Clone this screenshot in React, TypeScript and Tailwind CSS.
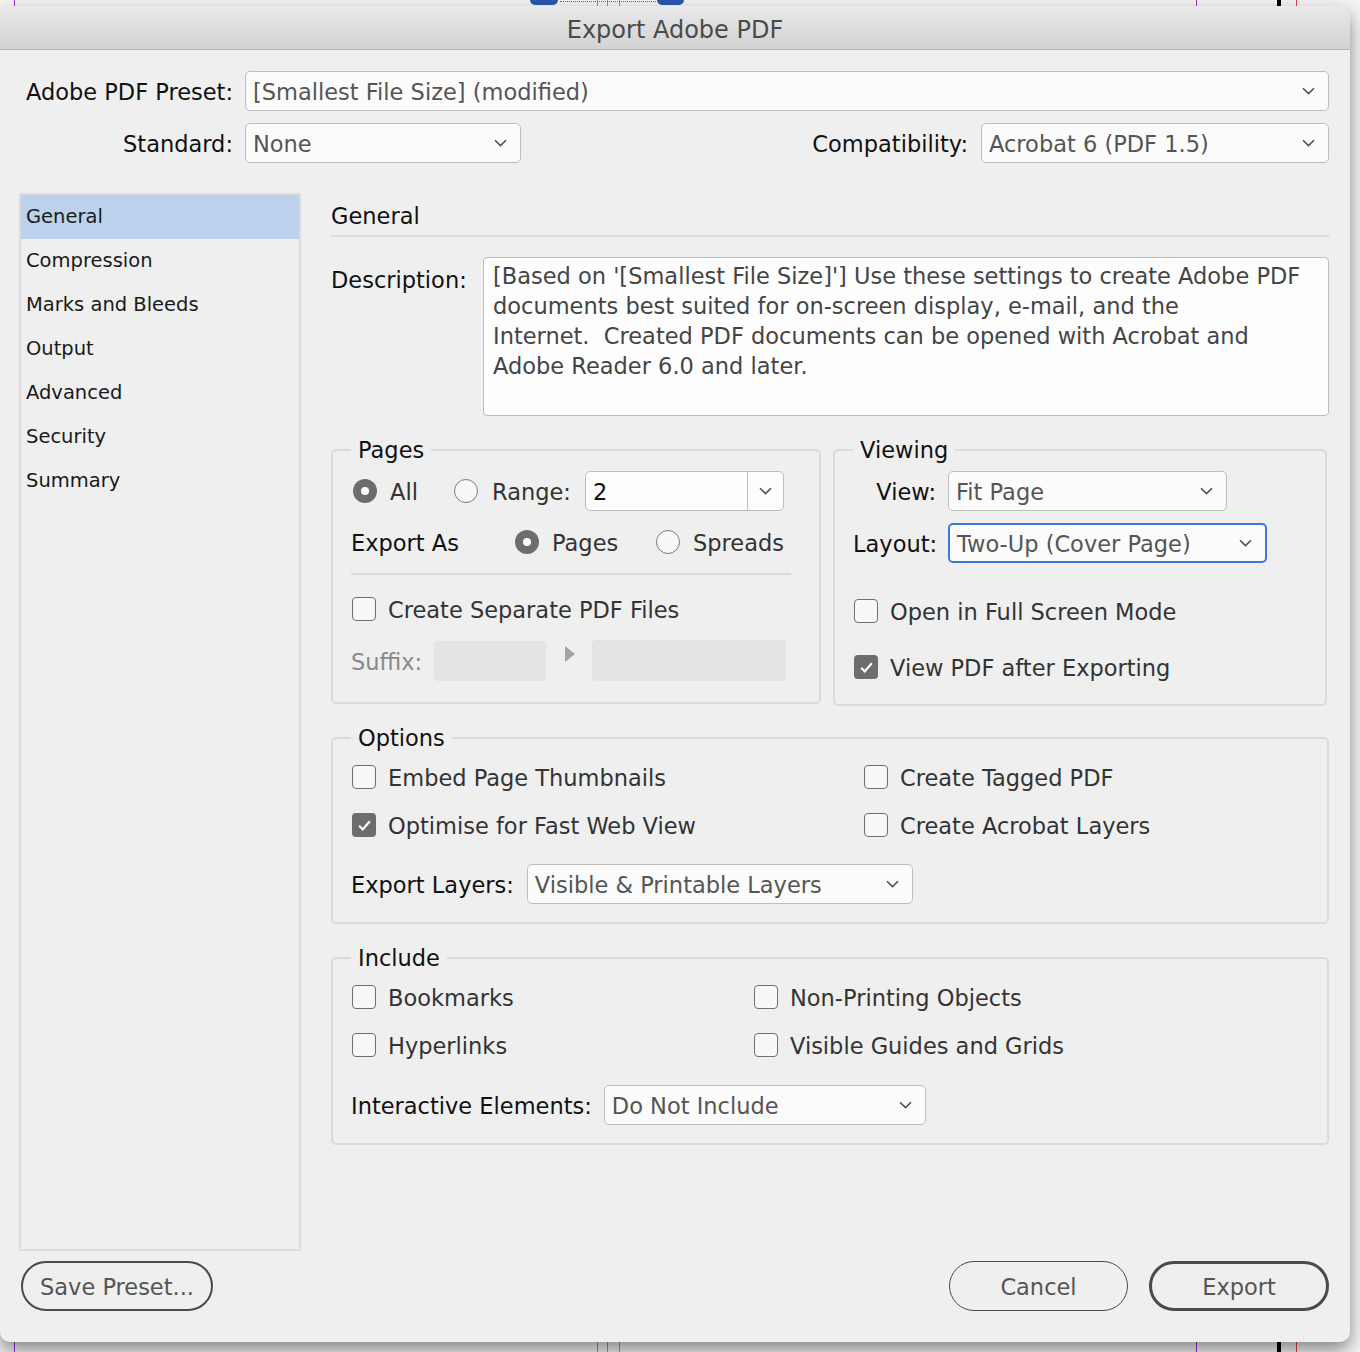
import clsx from "clsx"

function Chevron() {
  return (
    <svg width="13" height="8" viewBox="0 0 13 8" className="shrink-0">
      <path d="M1 1.2 L6.5 6.6 L12 1.2" fill="none" stroke="#505050" strokeWidth="1.6" />
    </svg>
  )
}

function Select({ value, className, focus }: { value: string; className?: string; focus?: boolean }) {
  return (
    <div
      className={clsx(
        "flex h-[40px] items-center justify-between rounded-[5px] bg-[#fbfbfb] pl-[7px] pr-[13px] text-[#555]",
        focus ? "border-2 border-[#3a7bd8]" : "border-[1.5px] border-[#bdbdbd]",
        className
      )}
    >
      <span className="whitespace-nowrap pt-[4px]">{value}</span>
      <Chevron />
    </div>
  )
}

function Radio({ checked }: { checked?: boolean }) {
  if (checked) {
    return (
      <span className="flex size-[24px] shrink-0 items-center justify-center rounded-full bg-[#6d6d6d]">
        <span className="size-[8px] rounded-full bg-white" />
      </span>
    )
  }
  return <span className="size-[24px] shrink-0 rounded-full border-[1.5px] border-[#7b7b7b] bg-[#f8f8f8]" />
}

function Checkbox({ checked }: { checked?: boolean }) {
  if (checked) {
    return (
      <span className="flex size-[24px] shrink-0 items-center justify-center rounded-[4px] bg-[#6d6d6d]">
        <svg width="17" height="17" viewBox="0 0 24 24">
          <path d="M4.5 12.5 L9.5 17.5 L19.5 6" fill="none" stroke="#fff" strokeWidth="3" />
        </svg>
      </span>
    )
  }
  return <span className="size-[24px] shrink-0 rounded-[4px] border-[1.5px] border-[#707070] bg-[#f8f8f8]" />
}

function Check({ label, checked, className }: { label: string; checked?: boolean; className?: string }) {
  return (
    <div className={clsx("flex h-[40px] items-center gap-[12px] pl-[1px] text-[#333]", className)}>
      <Checkbox checked={checked} />
      <span className="whitespace-nowrap pt-[4px]">{label}</span>
    </div>
  )
}

function Group({ title, className, children }: { title: string; className?: string; children: React.ReactNode }) {
  return (
    <fieldset className={clsx("rounded-[5px] border-2 border-[#dadada] px-[18px]", className)}>
      <legend className="px-[7px] leading-[30px] text-[#111]">{title}</legend>
      {children}
    </fieldset>
  )
}

const sections = ["General", "Compression", "Marks and Bleeds", "Output", "Advanced", "Security", "Summary"]

export default function App() {
  return (
    <div className="relative h-[1352px] w-[1360px] overflow-hidden bg-[#f4f4f4] font-['DejaVu_Sans',sans-serif] text-[22.5px]">
      {/* page guides behind the dialog */}
      <div className="absolute left-[14px] top-0 h-full w-[1px] bg-[#9b30e0]" />
      <div className="absolute left-[1196px] top-0 h-full w-[1px] bg-[#9b30e0]" />
      <div className="absolute left-[1277px] top-0 h-full w-[4px] bg-black" />
      <div className="absolute left-[1296px] top-0 h-full w-[1px] bg-[#e0404a]" />
      <div className="absolute left-[597px] top-0 h-full w-[1px] bg-[#22c6cc]" />
      <div className="absolute left-[607px] top-0 h-full w-[1px] bg-[#22c6cc]" />
      <div className="absolute left-[619px] top-0 h-full w-[1px] bg-[#22c6cc]" />
      <div className="absolute left-[530px] top-0 h-[5px] w-[28px] rounded-b-full bg-[#2a57b0]" />
      <div className="absolute left-[657px] top-0 h-[5px] w-[27px] rounded-b-full bg-[#2a57b0]" />
      <div className="absolute left-[560px] top-[1px] w-[96px] border-t border-dotted border-[#3a6fd0]" />

      <div className="relative z-10 mt-[6px] flex h-[1336px] w-[1350px] flex-col overflow-hidden rounded-[10px] bg-[#efefef] shadow-[0_8px_18px_rgba(0,0,0,0.45)]">
        <div className="flex h-[44px] shrink-0 items-center justify-center border-b border-[#b4b4b4] bg-gradient-to-b from-[#e9e9e9] to-[#d2d2d2] pt-[4px] text-[24px] text-[#4a4a4a]">
          Export Adobe PDF
        </div>

        <div className="flex flex-col pl-[19px] pr-[21px]">
          <div className="mt-[21px] flex items-center">
            <div className="w-[226px] whitespace-nowrap pr-[12px] pt-[4px] text-right text-[#111]">Adobe PDF Preset:</div>
            <Select value="[Smallest File Size] (modified)" className="flex-1" />
          </div>

          <div className="mt-[12px] flex items-center justify-between">
            <div className="flex items-center">
              <div className="w-[226px] pr-[12px] pt-[4px] text-right text-[#111]">Standard:</div>
              <Select value="None" className="w-[276px]" />
            </div>
            <div className="flex items-center">
              <div className="pr-[13px] pt-[4px] text-[#111]">Compatibility:</div>
              <Select value="Acrobat 6 (PDF 1.5)" className="w-[348px]" />
            </div>
          </div>

          <div className="mt-[30px] flex h-[1058px]">
            <div className="w-[282px] shrink-0 border-2 border-[#dcdcdc] text-[19.5px] text-[#1a1a1a]">
              {sections.map((s, i) => (
                <div key={s} className={clsx("flex h-[44px] items-center pl-[5px]", i === 0 && "bg-[#bcd2ec]")}>
                  {s}
                </div>
              ))}
            </div>

            <div className="ml-[30px] flex flex-1 flex-col">
              <div className="flex h-[44px] items-center border-b-2 border-[#dcdcdc] pt-[6px] text-[#111]">General</div>

              <div className="mt-[20px] flex">
                <div className="w-[152px] shrink-0 pt-[7px] text-[#111]">Description:</div>
                <div className="h-[159px] flex-1 rounded-[4px] border-[1.5px] border-[#bdbdbd] bg-[#fdfdfd] px-[9px] pt-[3px] leading-[30px] text-[#444]">
                  <div className="whitespace-pre">[Based on '[Smallest File Size]'] Use these settings to create Adobe PDF</div>
                  <div className="whitespace-pre">documents best suited for on-screen display, e-mail, and the</div>
                  <div className="whitespace-pre">Internet.  Created PDF documents can be opened with Acrobat and</div>
                  <div className="whitespace-pre">Adobe Reader 6.0 and later.</div>
                </div>
              </div>

              <div className="mt-[19px] flex items-start gap-[12px]">
                <Group title="Pages" className="w-[490px] pb-[21px]">
                  <div className="mt-[6px] flex h-[40px] items-center text-[#333]">
                    <div className="flex w-[103px] items-center gap-[13px] pl-[2px]">
                      <Radio checked />
                      <span className="pt-[4px]">All</span>
                    </div>
                    <div className="flex items-center gap-[14px]">
                      <Radio />
                      <span className="pt-[4px]">Range:</span>
                    </div>
                    <div className="ml-[14px] flex h-[40px] w-[199px] items-center rounded-[5px] border-[1.5px] border-[#bdbdbd] bg-[#fdfdfd]">
                      <span className="flex-1 pl-[7px] pt-[4px] text-[#111]">2</span>
                      <span className="flex h-full w-[36px] items-center justify-center border-l-[1.5px] border-[#bdbdbd]">
                        <Chevron />
                      </span>
                    </div>
                  </div>
                  <div className="mt-[11px] flex h-[40px] items-center text-[#333]">
                    <div className="w-[164px] pt-[4px] text-[#111]">Export As</div>
                    <div className="flex w-[141px] items-center gap-[13px]">
                      <Radio checked />
                      <span className="pt-[4px]">Pages</span>
                    </div>
                    <div className="flex items-center gap-[13px]">
                      <Radio />
                      <span className="pt-[4px]">Spreads</span>
                    </div>
                  </div>
                  <div className="mr-[10px] mt-[11px] h-[2px] bg-[#dcdcdc]" />
                  <Check label="Create Separate PDF Files" className="mt-[14px]" />
                  <div className="mt-[11px] flex h-[41px] items-center">
                    <span className="w-[83px] pt-[4px] text-[#8a8a8a]">Suffix:</span>
                    <span className="h-[40px] w-[112px] rounded-[4px] bg-[#e4e4e4]" />
                    <svg width="10" height="16" viewBox="0 0 10 16" className="mb-[14px] ml-[19px] mr-[17px]">
                      <path d="M0 0 L10 8 L0 16 Z" fill="#a3a3a3" />
                    </svg>
                    <span className="h-[41px] w-[194px] rounded-[4px] bg-[#e4e4e4]" />
                  </div>
                </Group>

                <Group title="Viewing" className="w-[494px] pb-[17px]">
                  <div className="mt-[6px] flex items-center">
                    <div className="w-[95px] pr-[12px] pt-[4px] text-right text-[#111]">View:</div>
                    <Select value="Fit Page" className="w-[279px]" />
                  </div>
                  <div className="mt-[12px] flex items-center">
                    <div className="w-[95px] pr-[12px] pt-[4px] text-right text-[#111]">Layout:</div>
                    <Select value="Two-Up (Cover Page)" className="w-[319px]" focus />
                  </div>
                  <Check label="Open in Full Screen Mode" className="mt-[28px]" />
                  <Check label="View PDF after Exporting" checked className="mt-[16px]" />
                </Group>
              </div>

              <Group title="Options" className="mt-[17px] pb-[18px]">
                <div className="mt-[4px] flex">
                  <Check label="Embed Page Thumbnails" className="w-[512px]" />
                  <Check label="Create Tagged PDF" />
                </div>
                <div className="mt-[8px] flex">
                  <Check label="Optimise for Fast Web View" checked className="w-[512px]" />
                  <Check label="Create Acrobat Layers" />
                </div>
                <div className="mt-[19px] flex items-center">
                  <div className="pr-[13px] pt-[4px] text-[#111]">Export Layers:</div>
                  <Select value="Visible & Printable Layers" className="w-[386px]" />
                </div>
              </Group>

              <Group title="Include" className="mt-[19px] pb-[18px]">
                <div className="mt-[4px] flex">
                  <Check label="Bookmarks" className="w-[402px]" />
                  <Check label="Non-Printing Objects" />
                </div>
                <div className="mt-[8px] flex">
                  <Check label="Hyperlinks" className="w-[402px]" />
                  <Check label="Visible Guides and Grids" />
                </div>
                <div className="mt-[20px] flex items-center">
                  <div className="pr-[12px] pt-[4px] text-[#111]">Interactive Elements:</div>
                  <Select value="Do Not Include" className="w-[322px]" />
                </div>
              </Group>
            </div>
          </div>

          <div className="mt-[10px] flex h-[50px] items-center justify-between">
            <button className="ml-[2px] flex h-[50px] w-[192px] items-center justify-center rounded-full border-2 border-[#4a4a4a] pt-[4px] text-[#555]">
              Save Preset...
            </button>
            <div className="flex gap-[21px]">
              <button className="flex h-[50px] w-[179px] items-center justify-center rounded-full border-[1.5px] border-[#4a4a4a] pt-[4px] text-[#555]">
                Cancel
              </button>
              <button className="flex h-[50px] w-[180px] items-center justify-center rounded-full border-[3px] border-[#4a4a4a] pt-[4px] text-[#555]">
                Export
              </button>
            </div>
          </div>
        </div>
      </div>
    </div>
  )
}
